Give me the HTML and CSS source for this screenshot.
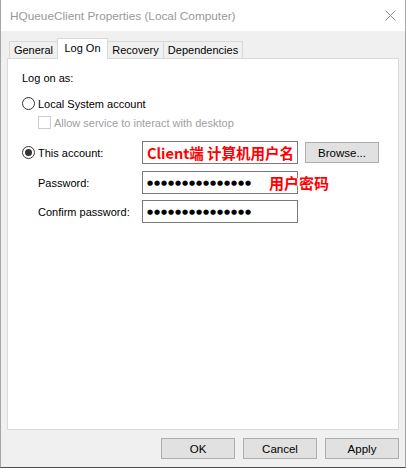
FILE: index.html
```html
<!DOCTYPE html>
<html lang="zh-CN">
<head>
    <meta charset="UTF-8">
    <title>HQueueClient Properties (Local Computer)</title>
    <link rel="stylesheet" href="styles.css">
</head>
<body>
    <div class="window">
        <div class="titlebar">
            <span class="title">HQueueClient Properties (Local Computer)</span>
            <svg class="close" width="11" height="11" viewBox="0 0 11 11">
                <path d="M0.5 0.5 L10.5 10.5 M10.5 0.5 L0.5 10.5" stroke="#8a8a8a" stroke-width="1" fill="none"/>
            </svg>
        </div>

        <div class="dialog">
            <div class="tabs">
                <div class="tab tab-general">General</div>
                <div class="tab tab-logon active">Log On</div>
                <div class="tab tab-recovery">Recovery</div>
                <div class="tab tab-deps">Dependencies</div>
            </div>

            <div class="panel">
                <div class="heading">Log on as:</div>

                <div class="option-row">
                    <span class="radio"></span>
                    <span class="option-label">Local System account</span>
                </div>

                <div class="check-row">
                    <span class="checkbox"></span>
                    <span class="disabled">Allow service to interact with desktop</span>
                </div>

                <div class="account-row">
                    <span class="radio checked"></span>
                    <span class="field-label short">This account:</span>
                    <div class="textbox">
                        <span class="note">Client端 计算机用户名</span>
                    </div>
                    <button class="btn browse">Browse...</button>
                </div>

                <div class="field-row first">
                    <span class="field-label">Password:</span>
                    <div class="textbox"><span class="dots">●●●●●●●●●●●●●●●</span></div>
                    <span class="note side">用户密码</span>
                </div>

                <div class="field-row">
                    <span class="field-label">Confirm password:</span>
                    <div class="textbox"><span class="dots">●●●●●●●●●●●●●●●</span></div>
                </div>
            </div>

            <div class="actions">
                <button class="btn">OK</button>
                <button class="btn">Cancel</button>
                <button class="btn">Apply</button>
            </div>
        </div>
    </div>
</body>
</html>
```

FILE: styles.css
```css
body {
    margin: 0;
    font-family: "Liberation Sans", Arial, sans-serif;
    font-size: 11px;
    color: #000;
    background: #ffffff;
}

.window {
    width: 406px;
    height: 468px;
    box-sizing: border-box;
    border-left: 1px solid #a6a6a6;
    border-right: 1px solid #a6a6a6;
    border-bottom: 1px solid #4a4a4a;
    display: flex;
    flex-direction: column;
}

.titlebar {
    height: 31px;
    flex: none;
    background: #ffffff;
    display: flex;
    align-items: center;
    justify-content: space-between;
    padding: 0 9px 0 9px;
}

.title {
    color: #999999;
    font-size: 11.8px;
}

.close {
    margin-top: -1px;
}

.dialog {
    flex: 1;
    background: #f0f0f0;
    display: flex;
    flex-direction: column;
    padding: 7px 6px 8px 6px;
}

.tabs {
    display: flex;
    align-items: flex-end;
    height: 20px;
    padding-left: 2px;
}

.tab {
    box-sizing: border-box;
    height: 17px;
    border: 1px solid #d9d9d9;
    border-bottom: none;
    background: #f0f0f0;
    text-align: center;
    line-height: 17px;
    margin-left: -1px;
}

.tab:first-child {
    margin-left: 0;
}

.tab.active {
    height: 21px;
    margin-bottom: -1px;
    background: #ffffff;
    line-height: 18px;
    position: relative;
    z-index: 1;
}

.tab-general { width: 49px; }
.tab-logon { width: 51px; }
.tab-recovery { width: 57px; }
.tab-deps { width: 80px; }

.panel {
    flex: 1;
    background: #ffffff;
    border: 1px solid #d9d9d9;
    padding: 12px 14px 0 14px;
}

.heading {
    line-height: 15px;
}

.option-row {
    display: flex;
    align-items: center;
    height: 15px;
    margin-top: 10px;
}

.radio {
    box-sizing: border-box;
    width: 13px;
    height: 13px;
    border: 1px solid #333333;
    border-radius: 50%;
    background: #ffffff;
    display: flex;
    align-items: center;
    justify-content: center;
    flex: none;
}

.radio.checked::after {
    content: "";
    width: 7px;
    height: 7px;
    border-radius: 50%;
    background: #333333;
}

.option-label {
    margin-left: 3px;
}

.check-row {
    display: flex;
    align-items: center;
    height: 15px;
    margin-top: 4px;
    padding-left: 16px;
}

.checkbox {
    box-sizing: border-box;
    width: 13px;
    height: 13px;
    border: 1px solid #cccccc;
    background: #ffffff;
    flex: none;
}

.disabled {
    color: #a0a0a0;
    margin-left: 3px;
}

.account-row {
    display: flex;
    align-items: center;
    margin-top: 11px;
}

.field-label {
    width: 104px;
    flex: none;
}

.field-label.short {
    margin-left: 3px;
}

.field-row {
    display: flex;
    align-items: center;
    padding-left: 16px;
    margin-top: 6px;
}

.field-row.first {
    margin-top: 7px;
}

.textbox {
    box-sizing: border-box;
    width: 156px;
    height: 23px;
    border: 1px solid #7a7a7a;
    background: #ffffff;
    display: flex;
    align-items: center;
    padding-left: 4px;
    flex: none;
    overflow: hidden;
}

.dots {
    font-family: "DejaVu Sans", sans-serif;
    font-size: 7px;
    letter-spacing: 0.9px;
}

.note {
    font-family: "Noto Sans CJK SC", "Noto Sans", sans-serif;
    font-weight: bold;
    font-size: 14.5px;
    color: #ff0000;
    text-shadow: 1px 0 0 #fff, -1px 0 0 #fff, 0 1px 0 #fff, 0 -1px 0 #fff;
    white-space: nowrap;
    line-height: 18px;
}

.note.side {
    margin-left: -29px;
    font-size: 15px;
}

.btn {
    box-sizing: border-box;
    width: 74px;
    height: 21px;
    border: 1px solid #adadad;
    background: #e1e1e1;
    font-family: "Liberation Sans", Arial, sans-serif;
    font-size: 11.5px;
    color: #000;
    padding: 0;
}

.browse {
    margin-left: 7px;
}

.actions {
    display: flex;
    justify-content: flex-end;
    gap: 8px;
    margin-top: 8px;
}
```
